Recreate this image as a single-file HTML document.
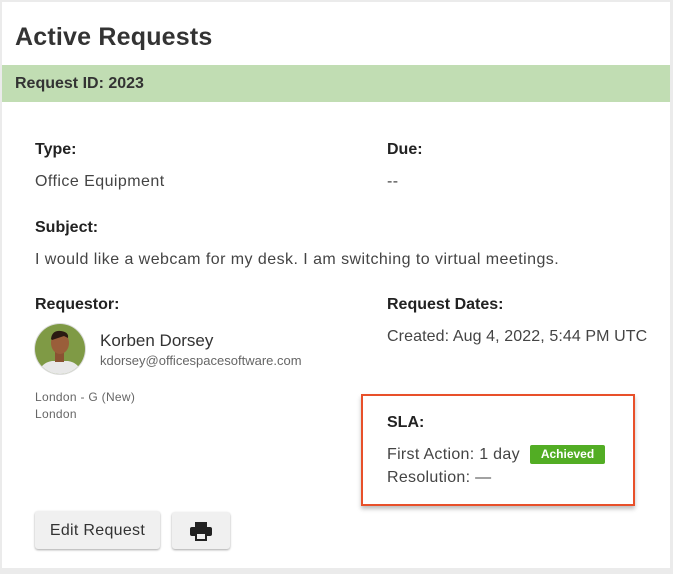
<!DOCTYPE html>
<html><head><style>
body{margin:0;background:#ebebeb;font-family:"Liberation Sans",sans-serif;color:#333;}
.panel{position:absolute;left:2px;top:2px;width:668px;height:566px;background:#fff;}
.a{position:absolute;white-space:nowrap;}
.h{font-weight:bold;font-size:16px;color:#222;}
.t{font-size:16px;color:#444;letter-spacing:0.45px;}
.s{font-size:12px;color:#666;letter-spacing:0.3px;}
.btn{position:absolute;background:#f0f0f0;border-radius:3px;box-shadow:0 1px 2px rgba(0,0,0,.35);}
</style></head><body>
<div class="panel"></div>
<div class="a" style="left:15px;top:23px;font-size:25px;font-weight:bold;color:#333;letter-spacing:0.2px">Active Requests</div>
<div class="a" style="left:2px;top:65px;width:668px;height:37px;background:#c1ddb3"></div>
<div class="a" style="left:15px;top:75px;font-size:16px;font-weight:bold;color:#333">Request ID: 2023</div>
<div class="a h" style="left:35px;top:141px">Type:</div>
<div class="a t" style="left:35px;top:173px">Office Equipment</div>
<div class="a h" style="left:387px;top:141px">Due:</div>
<div class="a t" style="left:387px;top:173px">--</div>
<div class="a h" style="left:35px;top:219px">Subject:</div>
<div class="a t" style="left:35px;top:251px">I would like a webcam for my desk. I am switching to virtual meetings.</div>
<div class="a h" style="left:35px;top:296px">Requestor:</div>
<div class="a h" style="left:387px;top:296px">Request Dates:</div>
<div class="a t" style="left:387px;top:328px;letter-spacing:0.1px">Created: Aug 4, 2022, 5:44 PM UTC</div>
<svg class="a" style="left:34px;top:323px" width="52" height="52" viewBox="0 0 52 52">
<defs><clipPath id="c"><circle cx="26" cy="26" r="25"/></clipPath></defs>
<circle cx="26" cy="26" r="26" fill="#ddd"/>
<g clip-path="url(#c)"><rect width="52" height="52" fill="#7f9a45"/>
<path d="M4 52 Q6 40 18 38 L34 38 Q46 40 48 52Z" fill="#e8e8e8"/>
<rect x="21" y="28" width="9" height="11" fill="#8a5232"/>
<ellipse cx="26" cy="20" rx="9" ry="11" fill="#9a5e3a"/>
<path d="M17 16 Q18 7 27 8 Q35 9 34 15 L30 13 L18 17Z" fill="#2a1a12"/></g>
</svg>
<div class="a" style="left:100px;top:331px;font-size:17px;color:#333">Korben Dorsey</div>
<div class="a" style="left:100px;top:353px;font-size:13px;color:#666">kdorsey@officespacesoftware.com</div>
<div class="a s" style="left:35px;top:390px">London - G (New)</div>
<div class="a s" style="left:35px;top:407px">London</div>
<div class="a" style="left:361px;top:394px;width:270px;height:108px;border:2px solid #e8502a;box-shadow:0 3px 4px rgba(0,0,0,.25)"></div>
<div class="a h" style="left:387px;top:414px">SLA:</div>
<div class="a t" style="left:387px;top:446px;letter-spacing:0.3px">First Action: 1 day</div>
<div class="a" style="left:530px;top:445px;width:75px;height:19px;background:#52ad24;border-radius:2px;color:#fff;font-weight:bold;font-size:12px;text-align:center;line-height:19px">Achieved</div>
<div class="a t" style="left:387px;top:469px;letter-spacing:0.3px">Resolution: —</div>
<div class="btn" style="left:35px;top:511px;width:125px;height:38px"></div>
<div class="a" style="left:35px;top:522px;width:125px;text-align:center;font-size:16px;color:#333;letter-spacing:0.3px">Edit Request</div>
<div class="btn" style="left:172px;top:512px;width:58px;height:37px"></div>
<svg class="a" style="left:190px;top:522px" width="22" height="19" viewBox="0 0 22 19">
<rect x="5" y="0" width="12" height="5" fill="#222"/>
<rect x="0" y="5" width="22" height="9" rx="2" fill="#222"/>
<rect x="5" y="11" width="12" height="8" fill="#222"/>
<rect x="7" y="12" width="8" height="5" fill="#f0f0f0"/>
</svg>
</body></html>
